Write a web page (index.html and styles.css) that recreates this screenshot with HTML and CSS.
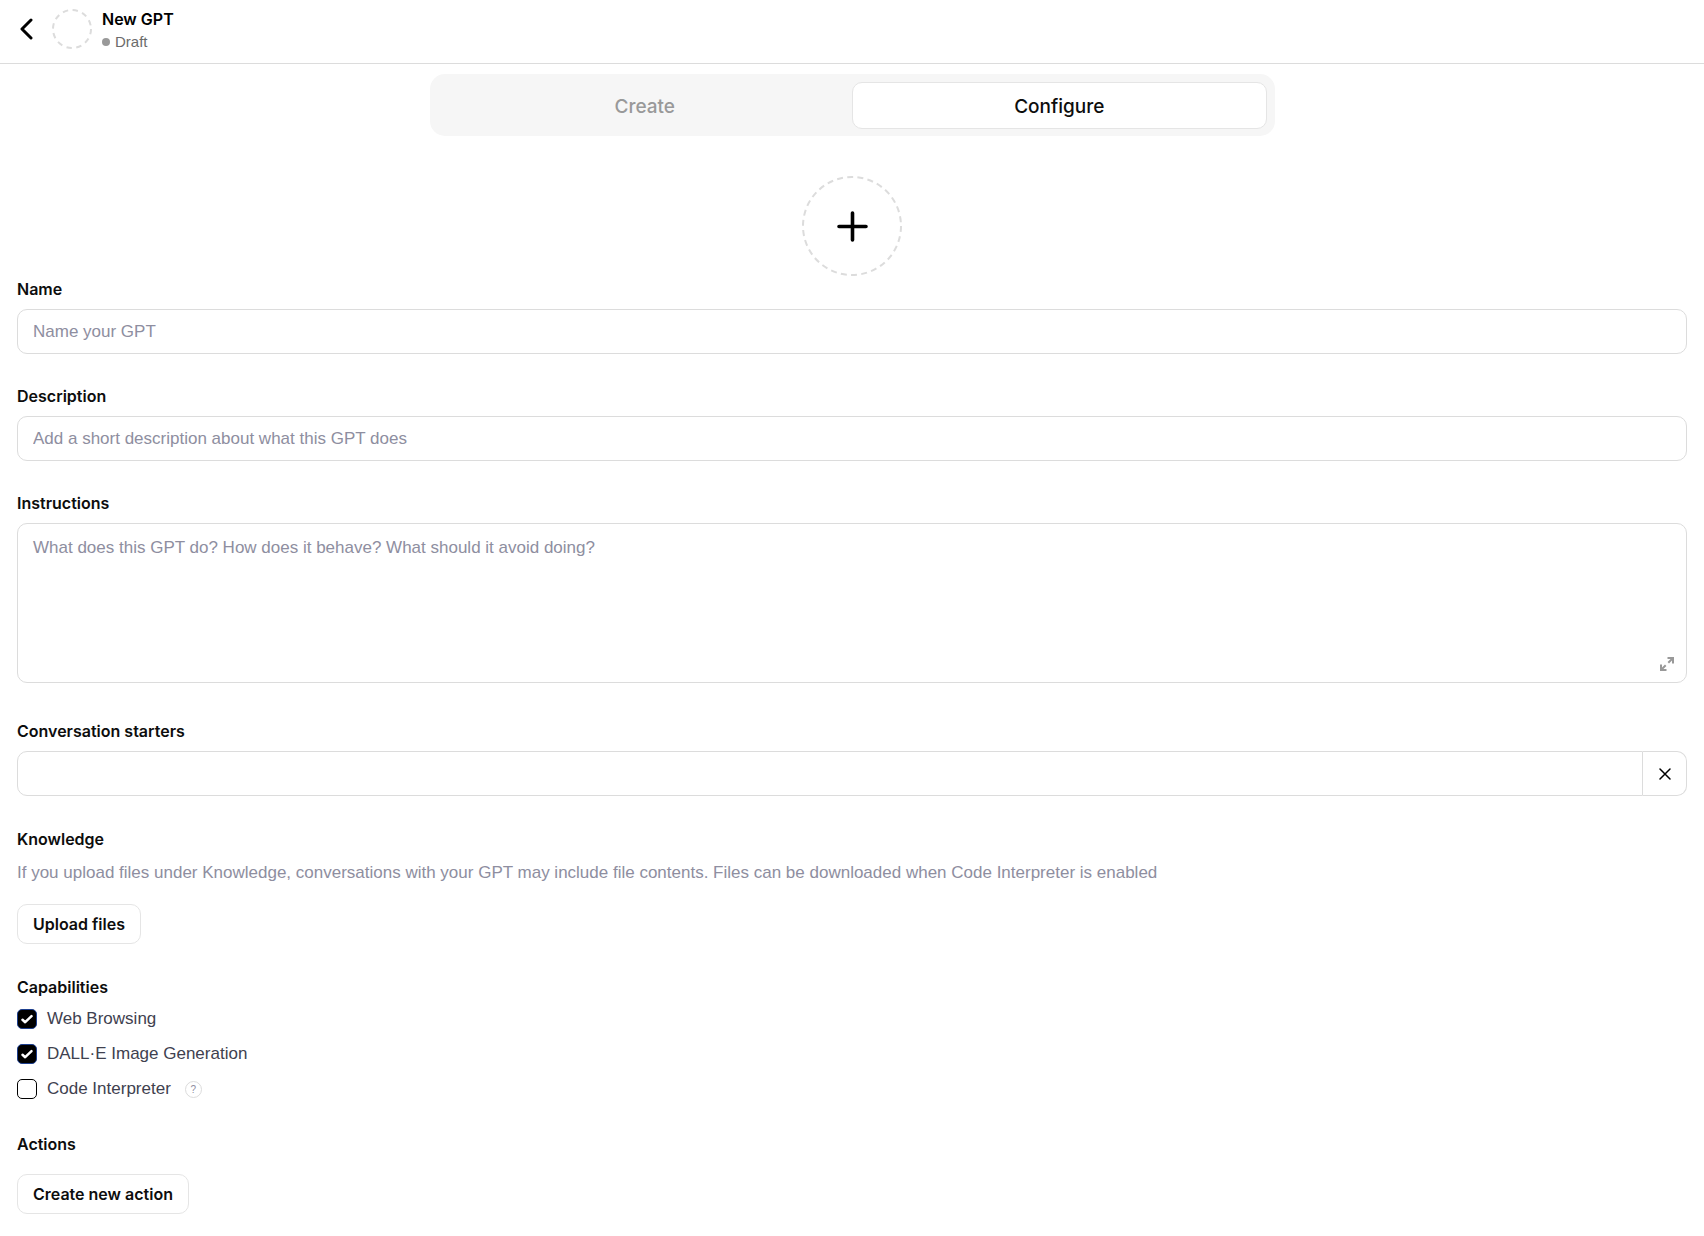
FILE: index.html
```html
<!DOCTYPE html>
<html lang="en">
<head>
<meta charset="utf-8">
<meta name="viewport" content="width=device-width, initial-scale=1">
<title>New GPT</title>
<link rel="stylesheet" href="styles.css">
</head>
<body>
<header class="topbar">
  <button class="back" type="button" aria-label="Back">
    <svg width="14" height="22" viewBox="0 0 14 22" fill="none" stroke="currentColor" stroke-width="3" stroke-linecap="round" stroke-linejoin="round"><path d="M11 2 2 11l9 9"/></svg>
  </button>
  <svg class="avatar" width="40" height="40" viewBox="0 0 40 40" fill="none" stroke="#dcdcdc" stroke-width="2"><circle cx="20" cy="20" r="19" stroke-dasharray="5.4 4.55"/></svg>
  <div class="heading">
    <h1 class="title">New GPT</h1>
    <p class="status"><span class="dot"></span>Draft</p>
  </div>
</header>
<main class="content">
  <div class="tabs" role="tablist">
    <button class="tab" type="button" role="tab" aria-selected="false">Create</button>
    <button class="tab tab-active" type="button" role="tab" aria-selected="true">Configure</button>
  </div>
  <form class="form">
    <button class="picture" type="button" aria-label="Add picture">
      <svg width="100" height="100" viewBox="0 0 100 100" fill="none"><circle cx="50" cy="50" r="49" stroke="#dcdcdc" stroke-width="2" stroke-dasharray="6 4.26"/><path d="M50.500 37v27M37 50.500h27" stroke="#000" stroke-width="3.600" stroke-linecap="round"/></svg>
    </button>
    <div class="field">
      <label class="label" for="name">Name</label>
      <input class="input" id="name" type="text" placeholder="Name your GPT">
    </div>
    <div class="field">
      <label class="label" for="description">Description</label>
      <input class="input" id="description" type="text" placeholder="Add a short description about what this GPT does">
    </div>
    <div class="field field-tall">
      <label class="label" for="instructions">Instructions</label>
      <div class="area-wrap">
        <textarea class="input area" id="instructions" placeholder="What does this GPT do? How does it behave? What should it avoid doing?"></textarea>
        <button class="expand" type="button" aria-label="Expand">
          <svg width="14" height="14" viewBox="0 0 14 14" fill="none" stroke="currentColor" stroke-width="2"><path d="M7.500 1H13v5.500M13 1 8.300 5.700M6.500 13H1V7.500M1 13l4.700-4.700"/></svg>
        </button>
      </div>
    </div>
    <div class="section">
      <label class="label" for="starter">Conversation starters</label>
      <div class="starter">
        <input class="input starter-input" id="starter" type="text">
        <button class="remove" type="button" aria-label="Remove">
          <svg width="12" height="12" viewBox="0 0 12 12" fill="none" stroke="currentColor" stroke-width="1.500" stroke-linecap="round"><path d="m1 1 10 10M11 1 1 11"/></svg>
        </button>
      </div>
    </div>
    <section class="section">
      <h2 class="label">Knowledge</h2>
      <p class="hint">If you upload files under Knowledge, conversations with your GPT may include file contents. Files can be downloaded when Code Interpreter is enabled</p>
      <button class="button" type="button">Upload files</button>
    </section>
    <section class="section">
      <h2 class="label">Capabilities</h2>
      <div class="checks">
        <label class="check"><input class="box" type="checkbox" checked>Web Browsing</label>
        <label class="check"><input class="box" type="checkbox" checked>DALL·E Image Generation</label>
        <div class="check-row">
          <label class="check"><input class="box" type="checkbox">Code Interpreter</label>
          <button class="help" type="button">?</button>
        </div>
      </div>
    </section>
    <section class="section">
      <h2 class="label label-actions">Actions</h2>
      <button class="button" type="button">Create new action</button>
    </section>
  </form>
</main>
</body>
</html>
```
FILE: styles.css
```css
*, *::before, *::after { box-sizing: border-box; }

body {
  margin: 0;
  background: #fff;
  color: #0d0d0d;
  font: 400 17px/24px "Liberation Sans", Arial, sans-serif;
}

h1, h2, p { margin: 0; }

button, input, textarea { font: inherit; color: inherit; }

button { padding: 0; border: 0; background: none; cursor: pointer; }

svg { display: block; }

.title, .tab, .label, .button { font-family: Inter, "Liberation Sans", sans-serif; }

.topbar {
  display: flex;
  align-items: center;
  height: 64px;
  padding: 0 20px 6px;
  border-bottom: 1px solid #dcdcdc;
}

.back { color: #000; }

.avatar { margin-left: 18px; }

.heading { margin-left: 10px; padding-top: 4px; }

.title { font-size: 16px; font-weight: 600; line-height: 22px; color: #000; }

.status {
  display: flex;
  align-items: center;
  gap: 5px;
  font-size: 15px;
  line-height: 24px;
  color: #6b6b6b;
}

.dot { width: 8px; height: 8px; border-radius: 50%; background: #999; }

.content { padding: 10px 17px 20px; }

.tabs {
  display: grid;
  grid-template-columns: 1fr 1fr;
  max-width: 845px;
  margin: 0 auto;
  padding: 8px 8px 7px;
  border-radius: 15px;
  background: #f6f6f6;
}

.tab {
  height: 47px;
  padding-top: 2px;
  border: 1px solid transparent;
  border-radius: 10px;
  font-size: 19px;
  font-weight: 500;
  color: #999;
}

.tab-active { border-color: #e5e5e5; background: #fff; color: #0d0d0d; }

.form { display: flex; flex-direction: column; }

.picture { align-self: center; margin: 40px 0 1px; border-radius: 50%; }

.field { margin-bottom: 30px; }

.field-tall { margin-bottom: 36px; }

.section { margin-bottom: 31px; }

.label {
  display: block;
  margin-bottom: 8px;
  font-size: 16px;
  font-weight: 600;
  line-height: 24px;
}

.input {
  display: block;
  width: 100%;
  height: 45px;
  padding: 1px 15px 0;
  border: 1px solid #dcdcdc;
  border-radius: 10px;
  background: #fff;
  outline: 0;
}

.input::placeholder { color: #8e8ea0; opacity: 1; }

.area-wrap { position: relative; }

.area { height: 160px; padding: 12px 15px; resize: none; }

.expand { position: absolute; right: 13px; bottom: 12px; color: #999; }

.starter { display: flex; }

.starter-input { flex: 1; border-radius: 10px 0 0 10px; }

.remove {
  display: grid;
  place-items: center;
  width: 44px;
  border: 1px solid #dcdcdc;
  border-left: 0;
  border-radius: 0 10px 10px 0;
  color: #000;
}

.hint { padding: 2px 0 19px; color: #8e8ea0; }

.button {
  height: 40px;
  padding: 0 15px;
  border: 1px solid #e5e5e5;
  border-radius: 10px;
  font-size: 16px;
  font-weight: 600;
}

.checks { display: flex; flex-direction: column; align-items: flex-start; gap: 11px; }

.check { display: flex; align-items: center; gap: 10px; color: #40414f; }

.check-row { display: flex; align-items: center; gap: 14px; }

.box {
  appearance: none;
  width: 20px;
  height: 20px;
  margin: 0;
  border: 1px solid #000;
  border-radius: 5px;
}

.box:checked {
  border-color: #1d3f8f;
  background: #000 url("data:image/svg+xml,%3Csvg xmlns='http://www.w3.org/2000/svg' viewBox='0 0 18 18' fill='none' stroke='white' stroke-width='2.500' stroke-linecap='round' stroke-linejoin='round'%3E%3Cpath d='M4.500 9.800 7.200 12.200 13.500 6.200'/%3E%3C/svg%3E") center / 18px 18px no-repeat;
}

.help {
  width: 17px;
  height: 17px;
  border: 1px solid #dcdcdc;
  border-radius: 50%;
  font-size: 10px;
  line-height: 15px;
  color: #8e8ea0;
}

.label-actions { margin-bottom: 18px; }
```
